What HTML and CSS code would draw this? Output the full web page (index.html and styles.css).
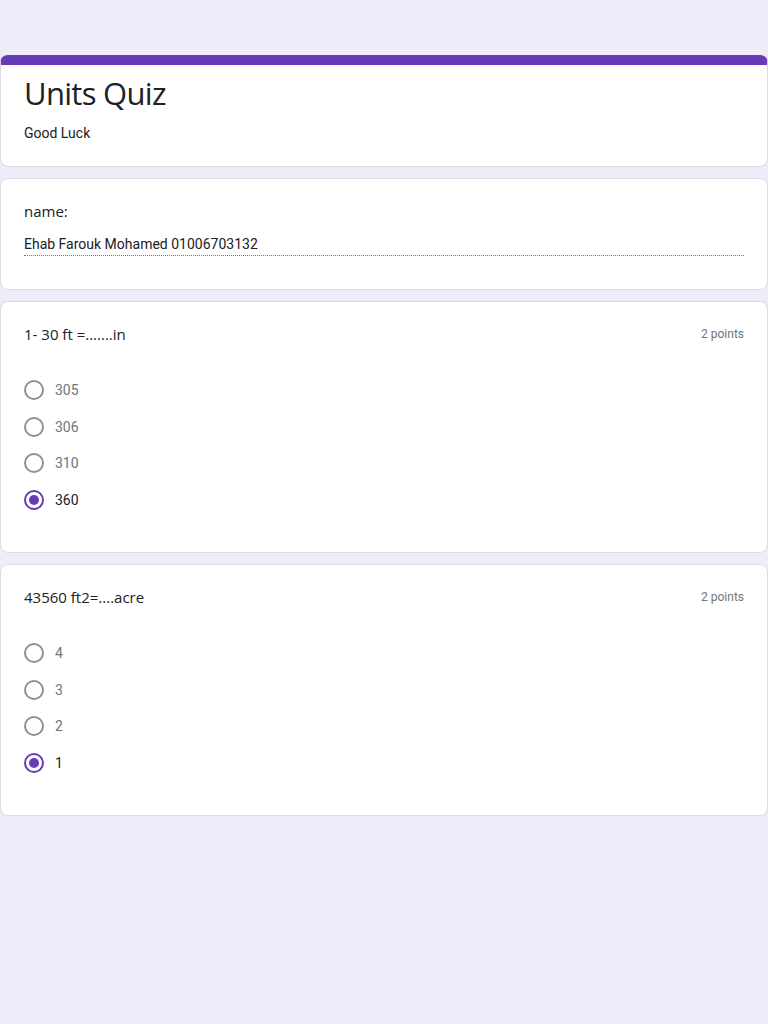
FILE: index.html
```html
<!DOCTYPE html>
<html lang="en">
<head>
<meta charset="utf-8">
<title>Units Quiz</title>
<link rel="stylesheet" href="styles.css">
</head>
<body>
<main class="form">
  <section class="card header-card">
    <h1 class="form-title">Units Quiz</h1>
    <p class="form-desc">Good Luck</p>
  </section>

  <section class="card text-card">
    <div class="q-head"><span class="q-title">name:</span></div>
    <div class="text-answer">Ehab Farouk Mohamed 01006703132</div>
  </section>

  <section class="card">
    <div class="q-head"><span class="q-title">1- 30 ft =.......in</span><span class="points">2 points</span></div>
    <ul class="options">
      <li class="option"><span class="radio"></span><span class="opt-label">305</span></li>
      <li class="option"><span class="radio"></span><span class="opt-label">306</span></li>
      <li class="option"><span class="radio"></span><span class="opt-label">310</span></li>
      <li class="option selected"><span class="radio"></span><span class="opt-label">360</span></li>
    </ul>
  </section>

  <section class="card">
    <div class="q-head"><span class="q-title">43560 ft2=....acre</span><span class="points">2 points</span></div>
    <ul class="options">
      <li class="option"><span class="radio"></span><span class="opt-label">4</span></li>
      <li class="option"><span class="radio"></span><span class="opt-label">3</span></li>
      <li class="option"><span class="radio"></span><span class="opt-label">2</span></li>
      <li class="option selected"><span class="radio"></span><span class="opt-label">1</span></li>
    </ul>
  </section>
</main>
</body>
</html>
```

FILE: styles.css
```css
html, body {
  margin: 0;
  padding: 0;
}
body {
  background: #f0ebf8;
  font-family: Roboto, "Liberation Sans", Arial, sans-serif;
  color: #202124;
  min-height: 1024px;
}
.form {
  padding-top: 55px;
  display: flex;
  flex-direction: column;
  gap: 11px;
}
.card {
  background: #fff;
  border: 1px solid #dadce0;
  border-radius: 8px;
  padding: 20px 23px 34px 23px;
}
.header-card {
  border-top: 10px solid #673ab7;
  padding-top: 8px;
  padding-bottom: 23px;
}
.text-card {
  padding-bottom: 33px;
}
.form-title {
  margin: 0;
  font-family: "Open Sans", Roboto, sans-serif;
  font-weight: 400;
  font-size: 31px;
  line-height: 40px;
  letter-spacing: -0.7px;
  color: #202124;
}
.form-desc {
  margin: 10px 0 0;
  font-size: 14px;
  line-height: 20px;
  color: #202124;
}
.q-head {
  display: flex;
  justify-content: space-between;
  align-items: center;
  height: 24px;
}
.q-title {
  font-family: "Open Sans", Roboto, sans-serif;
  font-size: 15px;
  line-height: 24px;
  color: #202124;
}
.points {
  font-size: 12px;
  color: #70757a;
}
.text-answer {
  margin-top: 11px;
  font-size: 14px;
  line-height: 20px;
  color: #202124;
  border-bottom: 1px dotted #70757a;
  padding-bottom: 1px;
}
.options {
  list-style: none;
  margin: 26px 0 0;
  padding: 0;
}
.option {
  display: flex;
  align-items: center;
  height: 36.5px;
}
.radio {
  box-sizing: border-box;
  width: 20px;
  height: 20px;
  border: 2px solid #8d9196;
  border-radius: 50%;
  margin-right: 11px;
  display: flex;
  align-items: center;
  justify-content: center;
  flex: none;
}
.opt-label {
  font-size: 14px;
  color: #70757a;
}
.option.selected .radio {
  border-color: #673ab7;
}
.option.selected .radio::after {
  content: "";
  width: 10px;
  height: 10px;
  border-radius: 50%;
  background: #673ab7;
}
.option.selected .opt-label {
  color: #202124;
}
```
